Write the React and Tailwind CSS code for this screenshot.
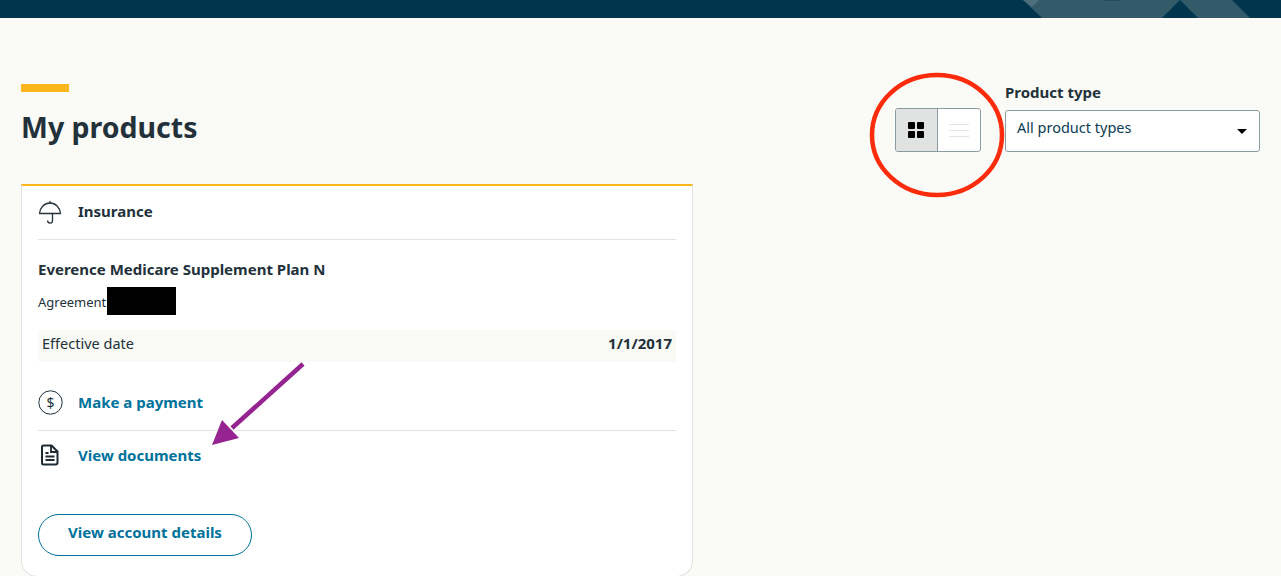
const font = { fontFamily: '"Noto Sans", sans-serif' };

function Umbrella() {
  return (
    <svg width="24" height="24" viewBox="0 0 24 24" fill="none" stroke="#22313a" strokeWidth="1.300" className="shrink-0">
      <path d="M1.500 13.500C2 7.500 6.500 3 12 3s10 4.500 10.500 10.500Z" strokeLinejoin="round" />
      <path d="M12 1.500V3M14.500 13.500v7.300a2.400 2.400 0 0 1-4.800 0" strokeLinecap="round" />
    </svg>
  );
}

function Dollar() {
  return (
    <svg width="25" height="25" viewBox="0 0 25 25" fill="none" className="shrink-0">
      <circle cx="12.500" cy="12.500" r="11.700" stroke="#22313a" strokeWidth="1" />
      <text x="12.500" y="17.500" textAnchor="middle" fontSize="14" fill="#22313a" fontFamily="Noto Sans">$</text>
    </svg>
  );
}

function Doc() {
  return (
    <svg width="20" height="22" viewBox="0 0 20 22" fill="none" stroke="#1d2a31" strokeWidth="2" className="shrink-0">
      <path d="M3.500 1.500h8l6 6v11a2 2 0 0 1-2 2h-12a1.500 1.500 0 0 1-1.500-1.500V3a1.500 1.500 0 0 1 1.500-1.500Z" strokeLinejoin="round" />
      <path d="M11 1.500V8h6.500M5.500 9h3M5.500 12.500h9M5.500 16h9" strokeWidth="1.800" />
    </svg>
  );
}

export default function App() {
  return (
    <div className="relative h-[576px] w-[1281px] overflow-hidden bg-[#fafaf6] text-[#22313a]" style={font}>
      <header className="relative h-[18px] overflow-hidden bg-[#00364d]">
        <svg className="absolute right-0 top-0" width="321" height="18" viewBox="0 0 321 18">
          <path d="M63 0L82 18H202L220 0L238 18H290L272 0Z" fill="#325a69" />
          <path d="M63 0L72 7L79 0Z" fill="#4d707d" />
          <path d="M142 0H163Q152 2 142 0Z" fill="#1c4a5c" />
        </svg>
      </header>

      <main className="flex items-start justify-between px-[21px]">
        <section className="w-[672px]">
          <div className="mt-[66px] h-2 w-12 bg-[#fdb71a]" />
          <h1 className="mt-[13px] h-[44px] text-[28.5px] font-bold leading-[44px] text-[#22313a]">My products</h1>

          <article className="mt-[35px] h-[393px] rounded-b-[16px] border border-t-2 border-[#e2e2e2] border-t-[#fdb71a] bg-white px-4">
            <div className="flex h-[54px] items-center gap-4 border-b border-[#e2e2e2] pb-[2px]">
              <Umbrella />
              <span className="text-[15px] font-bold">Insurance</span>
            </div>

            <h2 className="mt-[18px] text-[15px] font-bold leading-[22px]">Everence Medicare Supplement Plan N</h2>
            <div className="mt-[7px] flex h-7 items-center text-[13px]">
              <span className="pt-1">Agreement</span>
              <span className="ml-px h-7 w-[69px] bg-black" />
            </div>

            <div className="mt-[15px] flex h-8 items-center justify-between rounded-[2px] bg-[#f9f9f5] px-1 pb-1 text-[14.500px]">
              <span>Effective date</span>
              <span className="-mt-[2px] text-[15px] font-bold">1/1/2017</span>
            </div>

            <div className="mt-[14px] flex h-[55px] items-center gap-[15px] border-b border-[#e2e2e2] pb-[1px]">
              <Dollar />
              <a className="text-[15px] font-bold text-[#00729c]">Make a payment</a>
            </div>
            <div className="flex h-[49px] items-center gap-[18px] pb-px pl-[2px]">
              <Doc />
              <a className="text-[15px] font-bold text-[#00729c]">View documents</a>
            </div>

            <button className="mt-[34px] h-[42px] w-[214px] rounded-full border border-[#00729c] pb-[6px] text-[15px] font-bold text-[#00729c]">
              View account details
            </button>
          </article>
        </section>

        <div className="mt-[90px] flex items-start gap-6">
          <div className="flex h-[44px] w-[86px] overflow-hidden rounded-[3px] border border-[#8c9aa1] bg-white">
            <div className="flex w-[42px] items-center justify-center border-r border-[#8c9aa1] bg-[#e1e2e2] pr-[2px]">
              <div className="grid grid-cols-2 gap-[2px]">
                <span className="size-[7px] rounded-[1px] bg-black" />
                <span className="size-[7px] rounded-[1px] bg-black" />
                <span className="size-[7px] rounded-[1px] bg-black" />
                <span className="size-[7px] rounded-[1px] bg-black" />
              </div>
            </div>
            <div className="flex flex-1 flex-col items-center justify-center gap-[5px]">
              <span className="h-px w-5 bg-[#e4e4e4]" />
              <span className="h-px w-5 bg-[#e4e4e4]" />
              <span className="h-px w-5 bg-[#e4e4e4]" />
            </div>
          </div>
          <div className="-mt-[28px] w-[255px]">
            <div className="h-[30px] text-[15px] font-bold leading-[24px]">Product type</div>
            <div className="flex h-[42px] items-center justify-between rounded-[3px] border border-[#8c9aa1] bg-white px-[11px] pb-[6px] text-[14.500px] text-[#0b3d52]">
              <span>All product types</span>
              <span className="mr-px mt-[7px] h-0 w-0 border-x-[5px] border-t-[5px] border-x-transparent border-t-black" />
            </div>
          </div>
        </div>
      </main>

      {/* annotations drawn over the screenshot */}
      <svg className="pointer-events-none absolute left-0 top-0" width="1281" height="576" viewBox="0 0 1281 576" fill="none">
        <ellipse cx="937" cy="135" rx="65" ry="60" stroke="#fb2c0c" strokeWidth="4.500" />
        <path d="M303 364L232 428" stroke="#952490" strokeWidth="4.500" />
        <path d="M212 445L222 420L239 438Z" fill="#952490" />
      </svg>
    </div>
  );
}
